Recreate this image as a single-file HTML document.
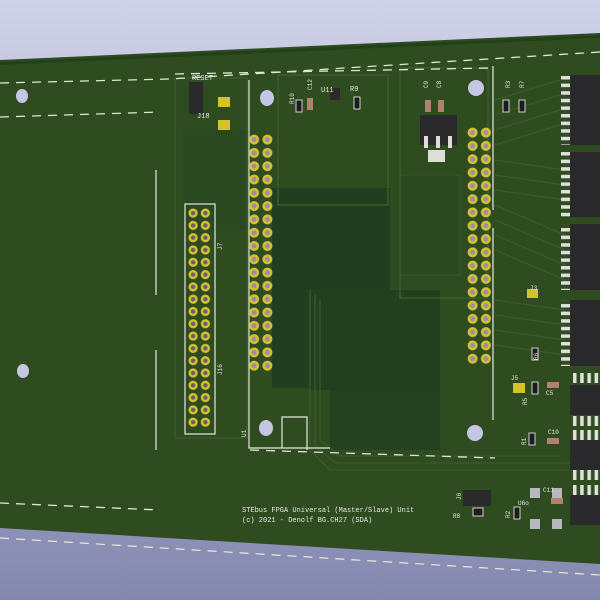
<!DOCTYPE html>
<html><head><meta charset="utf-8"><style>
html,body{margin:0;padding:0;width:600px;height:600px;overflow:hidden}
svg{display:block}
text{font-family:"Liberation Mono",monospace;fill:#e8e8e0}
</style></head><body>
<svg width="600" height="600" viewBox="0 0 600 600" xmlns="http://www.w3.org/2000/svg">
<defs>
<linearGradient id="bg" x1="0" y1="0" x2="0" y2="1">
<stop offset="0" stop-color="#cfd2e8"/><stop offset="1" stop-color="#8588b0"/>
</linearGradient>
<pattern id="padA" x="247.5" y="133" width="13.3" height="13.3" patternUnits="userSpaceOnUse">
<circle cx="6.6" cy="6.6" r="5" fill="#d6c22e"/><circle cx="6.6" cy="6.6" r="2.5" fill="#9a8cae"/>
</pattern>
<pattern id="padB" x="466" y="126" width="13.3" height="13.3" patternUnits="userSpaceOnUse">
<circle cx="6.6" cy="6.6" r="5" fill="#d6c22e"/><circle cx="6.6" cy="6.6" r="2.5" fill="#9a8cae"/>
</pattern>
<pattern id="padC" x="187" y="207" width="12.3" height="12.3" patternUnits="userSpaceOnUse">
<circle cx="6.1" cy="6.1" r="4.6" fill="#d6c22e"/><circle cx="6.1" cy="6.1" r="2.2" fill="#6a5c6e"/>
</pattern>
<pattern id="leg" x="561" y="75" width="8" height="7.6" patternUnits="userSpaceOnUse">
<rect x="0" y="1" width="8" height="3.5" fill="#e0e0dc"/>
</pattern>
<pattern id="legv" x="572" y="0" width="7.2" height="8" patternUnits="userSpaceOnUse">
<rect x="1" y="0" width="3.5" height="8" fill="#e0e0dc"/>
</pattern>
</defs>
<rect width="600" height="600" fill="url(#bg)"/>
<polygon points="0,60 600,33 600,564 0,528" fill="#2e4c20"/>
<polygon points="0,62 600,35 600,38 0,65" fill="#24401b"/>
<rect x="272" y="188" width="118" height="200" fill="#213f20"/>
<rect x="310" y="290" width="130" height="100" fill="#223f20"/>
<rect x="330" y="390" width="110" height="60" fill="#244120"/>
<rect x="183" y="130" width="65" height="100" fill="#2a4921"/>
<rect x="400" y="175" width="60" height="100" fill="#2b4920" stroke="#3a5a2a"/>
<rect x="278" y="75" width="110" height="130" fill="none" stroke="#3b5c2b" stroke-width="1.5"/>
<rect x="400" y="68" width="88" height="230" fill="none" stroke="#3b5c2b" stroke-width="1.5"/>
<rect x="175" y="78" width="72" height="360" fill="none" stroke="#3a5a2a" stroke-width="1.5"/>
<g stroke="#3a5a2a" stroke-width="1.3" fill="none">
<path d="M310 290 V450 L330 470 H600"/><path d="M315 295 V445 L335 463 H600"/>
<path d="M320 300 V440 L340 456 H560"/>
<path d="M495 100 L560 80 M495 115 L560 95 M495 130 L560 110 M495 145 L560 125 M495 160 L565 170 M495 175 L565 185 M495 190 L565 200 M495 205 L565 235 M495 220 L565 250 M495 235 L565 265 M495 250 L565 280 M495 300 L565 310 M495 315 L565 325 M495 330 L565 340 M495 345 L565 355"/>
</g>
<g stroke="#dfe6d6" stroke-width="1.3" stroke-dasharray="9,7" fill="none">
<path d="M0 83 L170 79 L600 52"/>
<path d="M175 74 L490 68"/>
<path d="M0 117 L160 112"/>
<path d="M0 503 L160 510"/>
<path d="M0 538 L600 575"/>
<path d="M250 450 L495 458"/>
</g>
<g stroke="#e6e8e0" stroke-width="1.2" fill="none">
<path d="M249 80 V448 H330"/>
<path d="M493 66 V210"/>
<path d="M493 228 V420"/>
<path d="M156 170 V295 M156 350 V450"/>
<path d="M282 448 V417 H307 V450"/>
<rect x="185" y="204" width="30" height="230"/>
</g>
<g fill="#c6c6e4"><ellipse cx="22" cy="96" rx="6" ry="7"/><ellipse cx="267" cy="98" rx="7" ry="8"/><ellipse cx="476" cy="88" rx="8" ry="8"/>
<ellipse cx="23" cy="371" rx="6" ry="7"/><ellipse cx="266" cy="428" rx="7" ry="8"/><ellipse cx="475" cy="433" rx="8" ry="8"/></g>
<rect x="187" y="207" width="24.6" height="221.4" fill="url(#padC)"/>
<rect x="247.5" y="133" width="26.6" height="239.4" fill="url(#padA)"/>
<rect x="466" y="126" width="26.6" height="239.4" fill="url(#padB)"/>
<g fill="#2a2a2c">
<rect x="570" y="75" width="30" height="70"/><rect x="570" y="152" width="30" height="65"/>
<rect x="570" y="224" width="30" height="66"/><rect x="570" y="300" width="30" height="66"/>
<rect x="570" y="385" width="30" height="30"/><rect x="570" y="440" width="30" height="30"/>
<rect x="570" y="495" width="30" height="30"/>
<rect x="189" y="82" width="14" height="32"/>
<rect x="420" y="115" width="37" height="30"/>
<rect x="330" y="88" width="10" height="12"/>
</g>
<rect x="561" y="75" width="9" height="70" fill="url(#leg)"/>
<rect x="561" y="152" width="9" height="65" fill="url(#leg)"/>
<rect x="561" y="224" width="9" height="66" fill="url(#leg)"/>
<rect x="561" y="300" width="9" height="66" fill="url(#leg)"/>
<rect x="572" y="373" width="28" height="10" fill="url(#legv)"/>
<rect x="572" y="416" width="28" height="10" fill="url(#legv)"/>
<rect x="572" y="430" width="28" height="10" fill="url(#legv)"/>
<rect x="572" y="470" width="28" height="10" fill="url(#legv)"/>
<rect x="572" y="485" width="28" height="10" fill="url(#legv)"/>
<g fill="#e0ddd8">
<rect x="424" y="136" width="4" height="12"/><rect x="436" y="136" width="4" height="12"/><rect x="448" y="136" width="4" height="12"/>
<rect x="428" y="150" width="17" height="12"/>
</g>
<g fill="#d6c22e"><rect x="218" y="97" width="12" height="10"/><rect x="218" y="120" width="12" height="10"/><rect x="527" y="289" width="11" height="9"/><rect x="513" y="383" width="12" height="10"/></g>
<g fill="#b08070"><rect x="307" y="98" width="6" height="12"/><rect x="425" y="100" width="6" height="12"/><rect x="438" y="100" width="6" height="12"/><rect x="547" y="382" width="12" height="6"/><rect x="547" y="438" width="12" height="6"/><rect x="551" y="498" width="12" height="6"/></g>
<g fill="#1c1c1c" stroke="#d0d0d0" stroke-width="1"><rect x="296" y="100" width="6" height="12"/><rect x="354" y="97" width="6" height="12"/><rect x="503" y="100" width="6" height="12"/><rect x="519" y="100" width="6" height="12"/><rect x="532" y="348" width="6" height="12"/><rect x="532" y="382" width="6" height="12"/><rect x="529" y="433" width="6" height="12"/><rect x="514" y="507" width="6" height="12"/><rect x="473" y="508" width="10" height="8"/></g>
<rect x="463" y="490" width="28" height="16" fill="#2a2a2c"/>
<g fill="#b8b8c0"><rect x="530" y="488" width="10" height="10"/><rect x="552" y="488" width="10" height="10"/><rect x="530" y="519" width="10" height="10"/><rect x="552" y="519" width="10" height="10"/></g>
<g font-size="7">
<text x="192" y="80">RESET</text><text x="197" y="118">J18</text>
<text x="321" y="92">U11</text><text x="350" y="91">R9</text>
<text x="530" y="290" font-size="6">J3</text><text x="511" y="380" font-size="6">J5</text>
<text x="546" y="395" font-size="6">C5</text><text x="548" y="434" font-size="6">C10</text><text x="543" y="492" font-size="6">C11</text>
<text x="518" y="505" font-size="6">U6o</text><text x="453" y="518" font-size="6">R8</text>
<text x="242" y="512" font-size="7">STEbus FPGA Universal (Master/Slave) Unit</text>
<text x="242" y="522" font-size="7">(c) 2021 - Denolf BG.CH27 (SDA)</text>
</g>
<g font-size="6">
<text transform="translate(246,437) rotate(-90)">U1</text>
<text transform="translate(222,375) rotate(-90)">J16</text>
<text transform="translate(222,250) rotate(-90)">J7</text>
<text transform="translate(294,104) rotate(-90)">R10</text>
<text transform="translate(312,90) rotate(-90)">C12</text>
<text transform="translate(428,88) rotate(-90)">C9</text>
<text transform="translate(441,88) rotate(-90)">C8</text>
<text transform="translate(510,88) rotate(-90)">R3</text>
<text transform="translate(524,88) rotate(-90)">R7</text>
<text transform="translate(538,360) rotate(-90)">R6</text>
<text transform="translate(527,405) rotate(-90)">R5</text>
<text transform="translate(526,445) rotate(-90)">R1</text>
<text transform="translate(461,500) rotate(-90)">J6</text>
<text transform="translate(510,518) rotate(-90)">R2</text>
</g>
</svg>
</body></html>
